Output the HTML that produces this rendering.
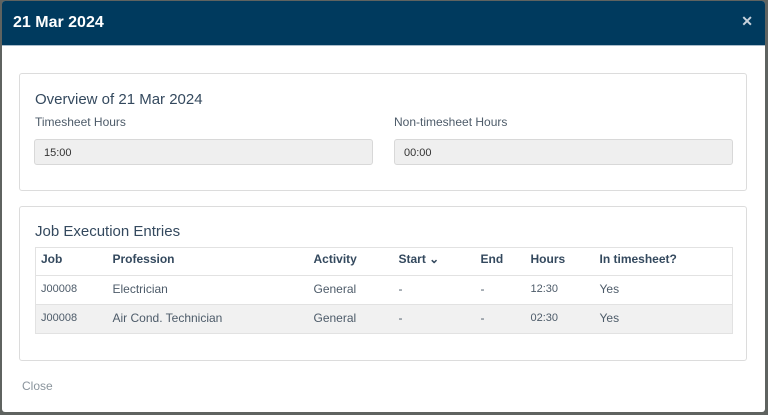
<!DOCTYPE html>
<html><head><style>
*{box-sizing:border-box;margin:0;padding:0}
body{width:768px;height:415px;background:#5f6360;font-family:"Liberation Sans",sans-serif;position:relative;overflow:hidden;color:#34495e}
.m{position:absolute;left:2px;top:1px;width:763px;height:411px;background:#fff;border-radius:3px;overflow:hidden}
.h{height:45px;background:#003a5e;color:#fff;font-weight:bold;font-size:16px;padding:13px 0 0 11px;border-bottom:1px solid #a9bccb}
.x{position:absolute;right:12px;top:12px;color:#c7d2dc;font-size:14px;font-weight:bold}
.card{position:absolute;left:17px;width:728px;border:1px solid #dcdcdc;border-radius:3px}
.t{font-size:15px;color:#34495e;position:absolute;left:15px}
.lbl{position:absolute;font-size:12px;color:#4d5b69}
.in{position:absolute;height:26px;background:#efefef;border:1px solid #d8d8d8;border-radius:3px;font-size:11px;padding:7px 0 0 9px;color:#333}
table{position:absolute;left:15px;top:40px;width:698px;border-collapse:collapse;border:1px solid #e2e2e2;font-size:12px}
td,th{text-align:left;height:29px;padding:0 0 3px 5px;border-top:1px solid #e2e2e2}
th{font-weight:bold;color:#34495e;height:28px;padding-bottom:5px}
td{color:#4d5b69}
tr.g td{background:#f1f1f1}
.s{font-size:11px}
</style></head><body>
<div class="m">
<div class="h">21 Mar 2024</div><div class="x">✕</div>
<div class="card" style="top:72px;height:118px">
<div class="t" style="top:17px">Overview of 21 Mar 2024</div>
<div class="lbl" style="left:15px;top:41px">Timesheet Hours</div>
<div class="lbl" style="left:374px;top:41px">Non-timesheet Hours</div>
<div class="in" style="left:14px;top:65px;width:339px">15:00</div>
<div class="in" style="left:374px;top:65px;width:339px">00:00</div>
</div>
<div class="card" style="top:205px;height:155px">
<div class="t" style="top:16px">Job Execution Entries</div>
<table>
<tr><th style="width:72px">Job</th><th style="width:201px">Profession</th><th style="width:85px">Activity</th><th style="width:82px">Start ⌄</th><th style="width:50px">End</th><th style="width:69px">Hours</th><th>In timesheet?</th></tr>
<tr><td class="s">J00008</td><td>Electrician</td><td>General</td><td>-</td><td>-</td><td class="s">12:30</td><td>Yes</td></tr>
<tr class="g"><td class="s">J00008</td><td>Air Cond. Technician</td><td>General</td><td>-</td><td>-</td><td class="s">02:30</td><td>Yes</td></tr>
</table>
</div>
<div style="position:absolute;left:20px;top:378px;font-size:12px;color:#8a949c">Close</div>
</div>
</body></html>
